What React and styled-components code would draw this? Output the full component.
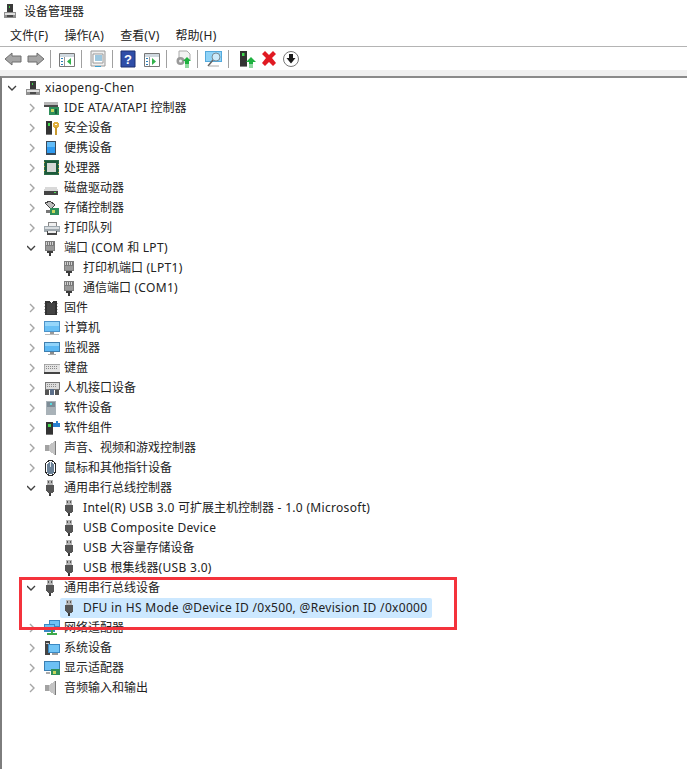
import React from 'react';
import styled, { createGlobalStyle } from 'styled-components';

const Global = createGlobalStyle`
  html, body { margin: 0; padding: 0; background: #fff; }
  body { font-family: "Noto Sans", "Noto Sans CJK SC", sans-serif; font-size: 12px; color: #1a1a1a; overflow: hidden; }
`;
const Page = styled.div`width: 687px; height: 769px; position: relative; overflow: hidden; background: #fff;`;
const TitleBar = styled.div`height: 24px; display: flex; align-items: center; gap: 7px; padding: 0 0 2px 3px; box-sizing: border-box; font-size: 12px; color: #222;`;
const MenuBar = styled.div`height: 22px; display: flex; gap: 16px; padding-left: 10px; align-items: center; font-size: 12px; color: #222;`;
const Toolbar = styled.div`height: 23px; border-top: 1px solid #b4b4b4; display: flex; align-items: center; padding-left: 4px; box-sizing: content-box;`;
const Strip = styled.div`height: 6px; background: #f0f0f0;`;
const ToolIcon = styled.svg`width: ${p => p.$w || 18}px; height: 18px; margin-right: ${p => p.$mr ?? 4}px; margin-left: ${p => p.$ml ?? 0}px; flex: none; display: block;`;
const TitleIcon = styled.svg`width: 14px; height: 16px; flex: none; display: block;`;
const Sep = styled.div`width: 1px; height: 18px; background: #a0a0a0; margin: 0 7px 0 1px; flex: none;`;
const TreePane = styled.div`border-top: 2px solid #8a8a8a; border-left: 2px solid #7d7d7d; height: 700px; box-sizing: border-box;`;
const Row = styled.div`height: 20px; display: flex; align-items: center; padding-left: ${p => 6 + p.$level * 19}px; position: relative;`;
const Chevron = styled.svg`width: 10px; height: 10px; flex: none; margin-right: 7px;`;
const Spacer = styled.span`width: 10px; flex: none; margin-right: 7px;`;
const IconBox = styled.svg`width: 16px; height: 16px; flex: none; margin-right: 4px; display: block;`;
const Label = styled.span`white-space: nowrap; height: 20px; line-height: 20px; font-size: 12px; color: #222;`;
const Latin = styled.span`letter-spacing: 0.31px;`;
const SelBack = styled.div`position: absolute; left: 58px; top: 0; width: 372px; height: 20px; background: #cce8ff; border-radius: 2px;`;
const RowContent = styled.div`position: relative; display: flex; align-items: center;`;
const Callout = styled.div`position: absolute; left: 19px; top: 577px; width: 438px; height: 53px; box-sizing: border-box; border: 3px solid #f4333c;`;

const Txt = ({ children }) => children.split(/([\x20-\x7e]+)/).map((s, i) => (
  i % 2 ? <Latin key={i}>{s}</Latin> : s
));

const ExpandIcon = ({ open }) => (
  <Chevron viewBox="0 0 10 10">
    <path d={open ? 'M0 3 L4 7 L8 3' : 'M3 1 L7 5 L3 9'} fill="none" stroke={open ? '#404040' : '#a6a6a6'} strokeWidth="1.4" />
  </Chevron>
);

const icons = {
  pc: <><path d="M5 1h6v8H5z" fill="#3a3a3a"/><path d="M6.500 3h1.500v2H6.500z" fill="#3fd24a"/><path d="M1 9h14v6H1z" fill="#8f8f8f"/><path d="M2 10h12v2H2z" fill="#e0e0e0"/><path d="M5 12h6v2H5z" fill="#4a4a4a"/></>,
  ide: <><path d="M0 2h14v5H0z" fill="#b8b8b8"/><path d="M0 5h14v2H0z" fill="#4a4a4a"/><path d="M5 7h10v8H5z" fill="#2f8f5b"/><path d="M7 9h3v3H7z" fill="#c8d860"/><path d="M11 9h2v5h-2z" fill="#14603a"/></>,
  sec: <><path d="M2 1h6v13H2z" fill="#333"/><path d="M3.500 3h2v3h-2z" fill="#42d84f"/><path d="M2 14h6v1H2z" fill="#777"/><circle cx="12" cy="5" r="3" fill="#e0b040"/><circle cx="12" cy="4.500" r="1" fill="#fff"/><path d="M11 7h2v8h-2z" fill="#c99a2e"/></>,
  portable: <><path d="M2 1h10v14H2z" fill="#3a4a5a"/><path d="M3 2h8v11H3z" fill="#2f9bf0"/><path d="M3 2h8v5H3z" fill="#62bcf7"/></>,
  cpu: <><path d="M0 0h15v15H0z" fill="#2c6b47"/><path d="M1 1h13v13H1z" fill="#1c5a3a"/><path d="M3 3h9v9H3z" fill="#d5d8d4"/><path d="M0 2h1v1H0zM0 6h1v1H0zM0 10h1v1H0zM14 4h1v1h-1zM14 8h1v1h-1zM14 12h1v1h-1z" fill="#c8a93e"/></>,
  disk: <><path d="M1 7h12l1 4H0z" fill="#d9d9d9"/><path d="M0 11h14v4H0z" fill="#444"/><path d="M10 12h2v1h-2z" fill="#53e05c"/></>,
  storage: <><path d="M1 3l5-2 5 4-4 4z" fill="#bdbdbd" stroke="#444" strokeWidth="1"/><path d="M2 10h6v3H2z" fill="#777"/><path d="M6 8h9v7H6z" fill="#2f8f5b"/><path d="M8 10h3v3H8z" fill="#c8d860"/></>,
  printer: <><path d="M4 2h8v4H4z" fill="#f0f0f0" stroke="#888"/><path d="M0 6h16v6H0z" fill="#9ea7ad"/><path d="M1 7h14v2H1z" fill="#d9dde0"/><path d="M3 11h10v4H3z" fill="#444"/><path d="M4 11h8v2H4z" fill="#eee"/></>,
  port: <g transform="translate(-2 0)"><path d="M3 1h10v10H3z" fill="#7d7d7d"/><path d="M4 2h8v3H4z" fill="#d2d2d2"/><path d="M5 2v3M7 2v3M9 2v3M11 2v3" stroke="#777"/><path d="M4 6h8v4H4z" fill="#999"/><path d="M5 11h6v2H5z" fill="#3b3b3b"/><path d="M7 13h2v3H7z" fill="#3b3b3b"/></g>,
  firmware: <><path d="M1 1h4l2 2 2-2h4v14H1z" fill="#333"/><path d="M3 3h8v11H3z" fill="#444"/><path d="M0 3h1v1H0zM0 6h1v1H0zM0 9h1v1H0zM0 12h1v1H0zM13 3h1v1h-1zM13 6h1v1h-1zM13 9h1v1h-1zM13 12h1v1h-1z" fill="#b0b0b0"/></>,
  computer: <><path d="M0 1h16v11H0z" fill="#4d93c9"/><path d="M1 2h14v9H1z" fill="#69c0f5"/><path d="M1 2h14v4H1z" fill="#96d6fa"/><path d="M6 12h4v2H6z" fill="#9a9a9a"/><path d="M1 14h14v1H1z" fill="#bbb"/></>,
  monitor: <><path d="M0 2h16v10H0z" fill="#3f7faf"/><path d="M1 3h14v8H1z" fill="#5cb8f3"/><path d="M1 3h14v3H1z" fill="#90d3fa"/><path d="M6 12h4v2H6z" fill="#8c8c8c"/><path d="M4 14h8v1H4z" fill="#aaa"/></>,
  keyboard: <><path d="M0 4h16v8H0z" fill="#e4e4e4" stroke="#999" strokeWidth=".8"/><path d="M2 6h12M2 8h12" stroke="#8a8a8a" strokeDasharray="1 1"/><path d="M0 12h16v2H0z" fill="#444"/></>,
  hid: <><path d="M1 2h14v7H1z" fill="#dcdcdc" stroke="#777"/><path d="M3 4h10M3 6h10" stroke="#8a8a8a" strokeDasharray="1 1"/><path d="M1 10h4v5H1zM11 10h4v5h-4z" fill="#555"/><path d="M6 9h4v6H6z" fill="#5b6f8a"/></>,
  softdev: <><path d="M2 1h10v14H2z" fill="#a9b2b8"/><path d="M3 2h8v5H3z" fill="#7d8c96"/><path d="M6 3h2v2H6z" fill="#57dbe0"/></>,
  softcomp: <><path d="M2 2h7v12H2z" fill="#333"/><path d="M3.500 4h3v3h-3z" fill="#42d84f"/><path d="M2 14h7v1H2z" fill="#777"/><path d="M9 3h3V1h2v2h2v4H9z" fill="#2a80d0"/></>,
  sound: <><path d="M1 5h4v6H1z" fill="#a2a2a2"/><path d="M5 5l6-4v14l-6-4z" fill="#c4c4c4"/><path d="M11 1v14" stroke="#7c7c7c"/></>,
  mouse: <><rect x="1.500" y="0.500" width="10" height="15" rx="5" fill="#fff" stroke="#2a2a2a"/><rect x="3" y="2" width="7" height="12" rx="3.500" fill="#6a8096"/><path d="M6.500 2v5" stroke="#dbe3e9"/></>,
  usb: <g transform="translate(-2 0)"><path d="M5 0h6v5H5z" fill="#b5b5b5"/><path d="M6 1h1.300v1.500H6zM8.700 1h1.300v1.500H8.700z" fill="#555"/><path d="M4 5h8v6l-2 2H6l-2-2z" fill="#555"/><path d="M7 13h2v3H7z" fill="#3a3a3a"/></g>,
  net: <><path d="M5 0h11v8H5z" fill="#3a89c4"/><path d="M6 1h9v5H6z" fill="#6ec2f4"/><path d="M0 4h11v8H0z" fill="#3a89c4"/><path d="M1 5h9v5H1z" fill="#6ec2f4"/><path d="M3 14h10M8 8v6" stroke="#3ea84a" strokeWidth="2"/></>,
  sys: <><path d="M1 1h5v14H1z" fill="#444"/><path d="M2 3h3v1H2z" fill="#ccc"/><path d="M4 4h12v9H4z" fill="#3a89c4"/><path d="M5 5h10v7H5z" fill="#71c4f5"/><path d="M8 13h6v2H8z" fill="#9a9a9a"/></>,
  display: <><path d="M0 1h16v10H0z" fill="#3a7fb3"/><path d="M1 2h14v8H1z" fill="#6cc0f4"/><path d="M7 9h9v6H7z" fill="#2f8f5b"/><path d="M9 10.500h3v3H9z" fill="#c8d860"/><path d="M2 12h4v2H2z" fill="#aaa"/></>,
};

const Icon = ({ name }) => <IconBox viewBox="0 0 16 16" shapeRendering="crispEdges">{icons[name]}</IconBox>;

const tree = [
  { l: 0, e: 'open', i: 'pc', t: 'xiaopeng-Chen' },
  { l: 1, e: 'closed', i: 'ide', t: 'IDE ATA/ATAPI 控制器' },
  { l: 1, e: 'closed', i: 'sec', t: '安全设备' },
  { l: 1, e: 'closed', i: 'portable', t: '便携设备' },
  { l: 1, e: 'closed', i: 'cpu', t: '处理器' },
  { l: 1, e: 'closed', i: 'disk', t: '磁盘驱动器' },
  { l: 1, e: 'closed', i: 'storage', t: '存储控制器' },
  { l: 1, e: 'closed', i: 'printer', t: '打印队列' },
  { l: 1, e: 'open', i: 'port', t: '端口 (COM 和 LPT)' },
  { l: 2, i: 'port', t: '打印机端口 (LPT1)' },
  { l: 2, i: 'port', t: '通信端口 (COM1)' },
  { l: 1, e: 'closed', i: 'firmware', t: '固件' },
  { l: 1, e: 'closed', i: 'computer', t: '计算机' },
  { l: 1, e: 'closed', i: 'monitor', t: '监视器' },
  { l: 1, e: 'closed', i: 'keyboard', t: '键盘' },
  { l: 1, e: 'closed', i: 'hid', t: '人机接口设备' },
  { l: 1, e: 'closed', i: 'softdev', t: '软件设备' },
  { l: 1, e: 'closed', i: 'softcomp', t: '软件组件' },
  { l: 1, e: 'closed', i: 'sound', t: '声音、视频和游戏控制器' },
  { l: 1, e: 'closed', i: 'mouse', t: '鼠标和其他指针设备' },
  { l: 1, e: 'open', i: 'usb', t: '通用串行总线控制器' },
  { l: 2, i: 'usb', t: 'Intel(R) USB 3.0 可扩展主机控制器 - 1.0 (Microsoft)' },
  { l: 2, i: 'usb', t: 'USB Composite Device' },
  { l: 2, i: 'usb', t: 'USB 大容量存储设备' },
  { l: 2, i: 'usb', t: 'USB 根集线器(USB 3.0)' },
  { l: 1, e: 'open', i: 'usb', t: '通用串行总线设备' },
  { l: 2, i: 'usb', t: 'DFU in HS Mode @Device ID /0x500, @Revision ID /0x0000', sel: true },
  { l: 1, e: 'closed', i: 'net', t: '网络适配器' },
  { l: 1, e: 'closed', i: 'sys', t: '系统设备' },
  { l: 1, e: 'closed', i: 'display', t: '显示适配器' },
  { l: 1, e: 'closed', i: 'sound', t: '音频输入和输出' },
];

const Win = ({ arrow }) => (
  <>
    <path d="M1.500 3.500h15v13h-15z" fill="#fff" stroke="#777" />
    <path d="M2 4h14v3H2z" fill="#cfd8df" />
    <path d="M6.500 7v9" stroke="#999" />
    <path d="M3 8.500h2M3 11.500h2M3 14.500h2" stroke="#2c7fb8" />
    {arrow}
  </>
);

export default function App() {
  return (
    <Page>
      <Global />
      <TitleBar>
        <TitleIcon viewBox="0 0 16 16" preserveAspectRatio="none" shapeRendering="crispEdges">{icons.pc}</TitleIcon>
        <span>设备管理器</span>
      </TitleBar>
      <MenuBar>
        <span><Txt>文件(F)</Txt></span><span><Txt>操作(A)</Txt></span><span><Txt>查看(V)</Txt></span><span><Txt>帮助(H)</Txt></span>
      </MenuBar>
      <Toolbar>
        <ToolIcon viewBox="0 0 18 18" $mr={5}><path d="M1 9l7-6v3h9v6H8v3z" fill="#a5a5a5" stroke="#6f6f6f" /></ToolIcon>
        <ToolIcon viewBox="0 0 18 18"><path d="M17 9l-7-6v3H1v6h9v3z" fill="#a5a5a5" stroke="#6f6f6f" /></ToolIcon>
        <Sep />
        <ToolIcon viewBox="0 0 18 18"><Win arrow={<path d="M13 8v7l-4-3.500z" fill="#31b24a" />} /></ToolIcon>
        <Sep />
        <ToolIcon viewBox="0 0 18 18"><path d="M2 1h14v15H2z" fill="#eee" stroke="#999" /><path d="M4 4h10v9H4z" fill="#fff" stroke="#999" /><path d="M6 6h7M6 8h7M6 10h7" stroke="#3a8fbf" /><path d="M6 16h6v1H6z" fill="#3aa0d0" /></ToolIcon>
        <Sep />
        <ToolIcon viewBox="0 0 18 18" $mr={5}><path d="M1 1h14v16H1z" fill="#2f4ea8" stroke="#1c2f70" /><text x="8" y="13.500" textAnchor="middle" fontSize="13" fontWeight="700" fill="#fff" fontFamily="Liberation Sans">?</text></ToolIcon>
        <ToolIcon viewBox="0 0 18 18"><Win arrow={<path d="M9 8v7l4-3.500z" fill="#31b24a" />} /></ToolIcon>
        <Sep />
        <ToolIcon viewBox="0 0 18 18"><path d="M5 1h8l3 3v6H5z" fill="#f3f3f3" stroke="#aaa" /><circle cx="6.500" cy="11" r="4" fill="#999" /><circle cx="6.500" cy="11" r="1.500" fill="#eee" /><path d="M13 7l4 4h-2v3h-4v-3H9z" fill="#1eb13f" /><path d="M11 15h4M11 17h4" stroke="#1eb13f" /></ToolIcon>
        <Sep />
        <ToolIcon viewBox="0 0 18 18"><path d="M0 1h17v11H0z" fill="#54a9dc" /><path d="M1 2h15v9H1z" fill="#8fd3f7" /><circle cx="11" cy="7" r="4" fill="#cdeafa" stroke="#7a8c96" /><path d="M8 10l-5 6" stroke="#666" strokeWidth="1.500" /><path d="M4 16h10" stroke="#aaa" /></ToolIcon>
        <Sep />
        <ToolIcon viewBox="0 0 18 18" $ml={3} $mr={3}><path d="M1 1h7v15H1z" fill="#333" /><path d="M3 3h2.500v3H3z" fill="#42d84f" /><path d="M1 16h7v1H1z" fill="#888" /><path d="M12 7l5 5h-3v2h-4v-2H7z" fill="#1eb13f" /><path d="M10 15h4M10 17h4" stroke="#1eb13f" /></ToolIcon>
        <ToolIcon viewBox="0 0 18 18"><path d="M2 4l3-3 4 4 4-4 3 3-4 4 4 5-3 3-4-4-4 4-3-3 4-5z" fill="#e01a22" /></ToolIcon>
        <ToolIcon viewBox="0 0 18 18"><circle cx="9" cy="9" r="7.500" fill="#fff" stroke="#777" /><path d="M7 4h4v4h2.500L9 13.500 4.500 8H7z" fill="#1a1a1a" /></ToolIcon>
      </Toolbar>
      <Strip />
      <TreePane>
        {tree.map((n, idx) => (
          <Row key={idx} $level={n.l}>
            {n.sel && <SelBack />}
            <RowContent>
              {n.e ? <ExpandIcon open={n.e === 'open'} /> : <Spacer />}
              <Icon name={n.i} />
              <Label><Txt>{n.t}</Txt></Label>
            </RowContent>
          </Row>
        ))}
      </TreePane>
      <Callout />
    </Page>
  );
}
